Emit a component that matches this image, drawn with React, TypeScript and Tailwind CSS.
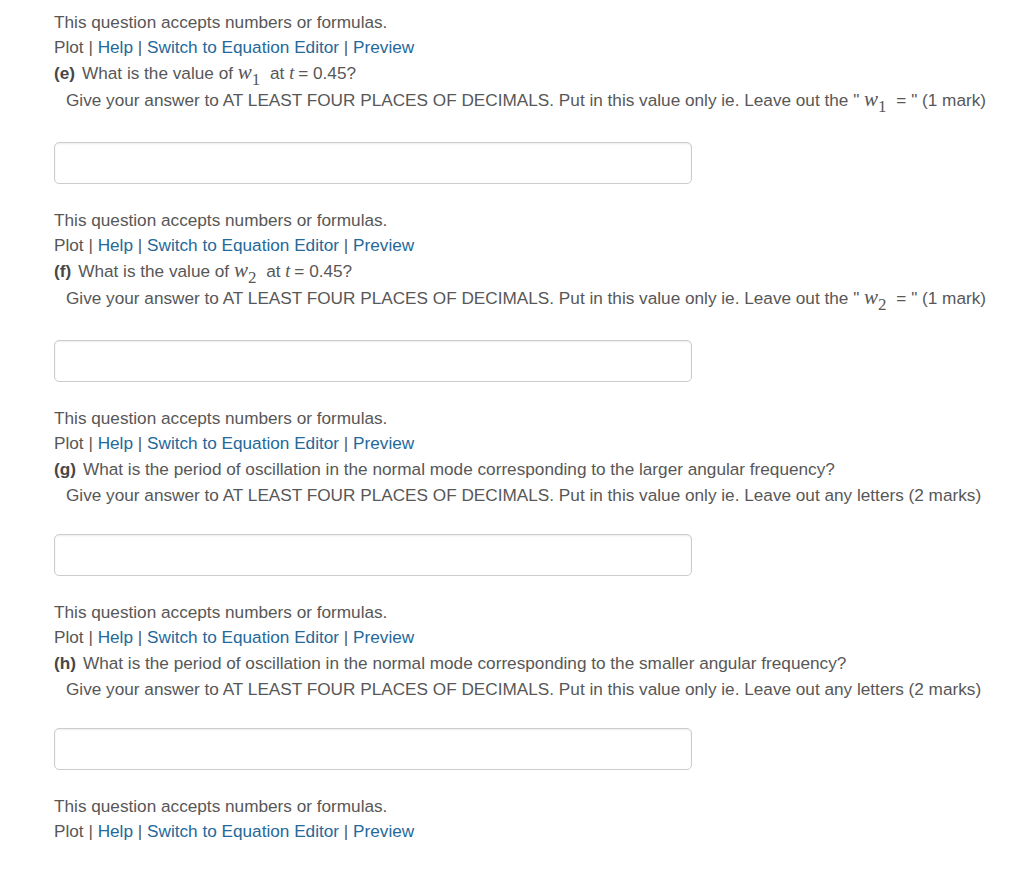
const parts = [
  {
    label: "(e)",
    math: true,
    prompt: (
      <>
        What is the value of <W n="1" /> at <T />= 0.45?
      </>
    ),
    detail: (
      <>
        Give your answer to AT LEAST FOUR PLACES OF DECIMALS. Put in this value only ie. Leave out the "{" "}
        <W n="1" /> = " (1 mark)
      </>
    ),
  },
  {
    label: "(f)",
    math: true,
    prompt: (
      <>
        What is the value of <W n="2" /> at <T />= 0.45?
      </>
    ),
    detail: (
      <>
        Give your answer to AT LEAST FOUR PLACES OF DECIMALS. Put in this value only ie. Leave out the "{" "}
        <W n="2" /> = " (1 mark)
      </>
    ),
  },
  {
    label: "(g)",
    math: false,
    prompt: <>What is the period of oscillation in the normal mode corresponding to the larger angular frequency?</>,
    detail: (
      <>Give your answer to AT LEAST FOUR PLACES OF DECIMALS. Put in this value only ie. Leave out any letters (2 marks)</>
    ),
  },
  {
    label: "(h)",
    math: false,
    prompt: <>What is the period of oscillation in the normal mode corresponding to the smaller angular frequency?</>,
    detail: (
      <>Give your answer to AT LEAST FOUR PLACES OF DECIMALS. Put in this value only ie. Leave out any letters (2 marks)</>
    ),
  },
];

// Mathe-Variablen im Stil von MathJax (kursive Serifenschrift)
function W({ n }: { n: string }) {
  return (
    <span className="font-['Liberation_Serif',serif] text-[21px] leading-none">
      <i>w</i>
      <span className="relative top-[6px] text-[17px] not-italic">{n}</span>
      <span className="inline-block w-[5px]" />
    </span>
  );
}

function T() {
  return <i className="mr-[4px] font-['Liberation_Serif',serif] text-[18px] leading-none">t</i>;
}

function Hinweis() {
  return (
    <div className="leading-[25px]">
      <p>This question accepts numbers or formulas.</p>
      <p>
        Plot | <a className="text-[#24699a]">Help</a> | <a className="text-[#24699a]">Switch to Equation Editor</a> |{" "}
        <a className="text-[#24699a]">Preview</a>
      </p>
    </div>
  );
}

export default function App() {
  return (
    <div className="min-h-screen bg-white pl-[54px] pt-[10px] font-['Liberation_Sans',Arial,sans-serif] text-[17.2px] text-[#575757]">
      {parts.map((p) => (
        <div key={p.label} className="mb-[24px]">
          <Hinweis />
          <p className={p.math ? "leading-[27px]" : "leading-[26px]"}>
            <b className="mr-[7px] text-[#474747]">{p.label}</b>
            {p.prompt}
          </p>
          <p className={p.math ? "pl-[12px] leading-[27px]" : "pl-[12px] leading-[26px]"}>{p.detail}</p>
          <input
            type="text"
            className={
              (p.math ? "mt-[28px]" : "mt-[26px]") +
              " block h-[42px] w-[638px] rounded-[5px] border border-[#cccccc] bg-white shadow-[inset_0_1px_2px_rgba(0,0,0,0.08)] outline-none"
            }
          />
        </div>
      ))}
      <Hinweis />
    </div>
  );
}
